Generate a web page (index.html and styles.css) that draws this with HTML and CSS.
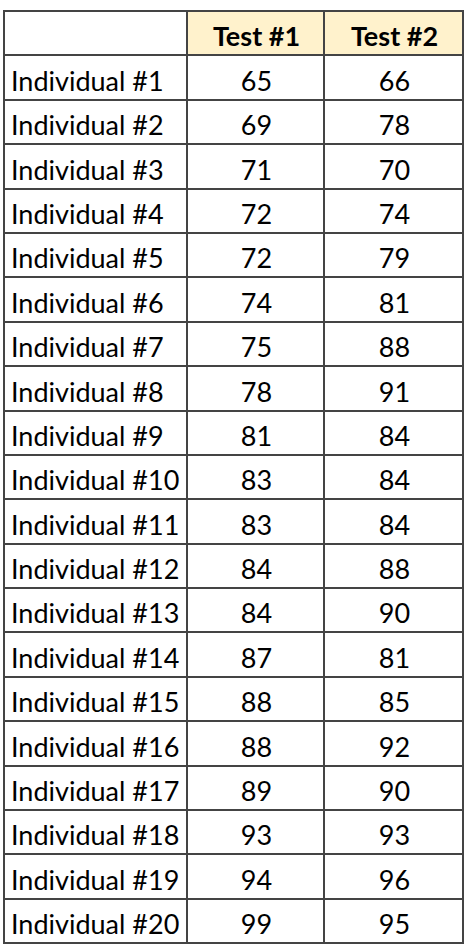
FILE: index.html
```html
<!DOCTYPE html>
<html>
<head>
<meta charset="utf-8">
<link rel="stylesheet" href="styles.css">
</head>
<body>
<table class="sheet">
<colgroup><col class="c-name"><col class="c-val"><col class="c-val2"></colgroup>
<thead>
<tr><th class="corner"></th><th class="head">Test #1</th><th class="head">Test #2</th></tr>
</thead>
<tbody>
<tr><td class="name">Individual #1</td><td class="num">65</td><td class="num">66</td></tr>
<tr><td class="name">Individual #2</td><td class="num">69</td><td class="num">78</td></tr>
<tr><td class="name">Individual #3</td><td class="num">71</td><td class="num">70</td></tr>
<tr><td class="name">Individual #4</td><td class="num">72</td><td class="num">74</td></tr>
<tr><td class="name">Individual #5</td><td class="num">72</td><td class="num">79</td></tr>
<tr><td class="name">Individual #6</td><td class="num">74</td><td class="num">81</td></tr>
<tr><td class="name">Individual #7</td><td class="num">75</td><td class="num">88</td></tr>
<tr><td class="name">Individual #8</td><td class="num">78</td><td class="num">91</td></tr>
<tr><td class="name">Individual #9</td><td class="num">81</td><td class="num">84</td></tr>
<tr><td class="name">Individual #10</td><td class="num">83</td><td class="num">84</td></tr>
<tr><td class="name">Individual #11</td><td class="num">83</td><td class="num">84</td></tr>
<tr><td class="name">Individual #12</td><td class="num">84</td><td class="num">88</td></tr>
<tr><td class="name">Individual #13</td><td class="num">84</td><td class="num">90</td></tr>
<tr><td class="name">Individual #14</td><td class="num">87</td><td class="num">81</td></tr>
<tr><td class="name">Individual #15</td><td class="num">88</td><td class="num">85</td></tr>
<tr><td class="name">Individual #16</td><td class="num">88</td><td class="num">92</td></tr>
<tr><td class="name">Individual #17</td><td class="num">89</td><td class="num">90</td></tr>
<tr><td class="name">Individual #18</td><td class="num">93</td><td class="num">93</td></tr>
<tr><td class="name">Individual #19</td><td class="num">94</td><td class="num">96</td></tr>
<tr><td class="name">Individual #20</td><td class="num">99</td><td class="num">95</td></tr>
</tbody>
</table>
</body>
</html>
```
FILE: styles.css
```css
html, body {
  margin: 0;
  padding: 0;
  background: #ffffff;
}
body {
  padding: 10px 0 0 3px;
}
.sheet {
  border-collapse: collapse;
  table-layout: fixed;
  width: 459px;
  font-family: Lato, "Open Sans", sans-serif;
  font-size: 27px;
  color: #000;
}
.c-name { width: 183px; }
.c-val { width: 137px; }
.c-val2 { width: 139px; }
.sheet th, .sheet td {
  border: 2px solid #444;
  height: 44.4px;
  box-sizing: border-box;
  padding: 0 4px 0 6px;
  vertical-align: bottom;
  line-height: 36px;
  white-space: nowrap;
}
.head {
  background: #fff2cc;
  font-weight: 700;
  text-align: center;
}
.name { text-align: left; }
.num { text-align: center; padding-left: 4px; }
```
